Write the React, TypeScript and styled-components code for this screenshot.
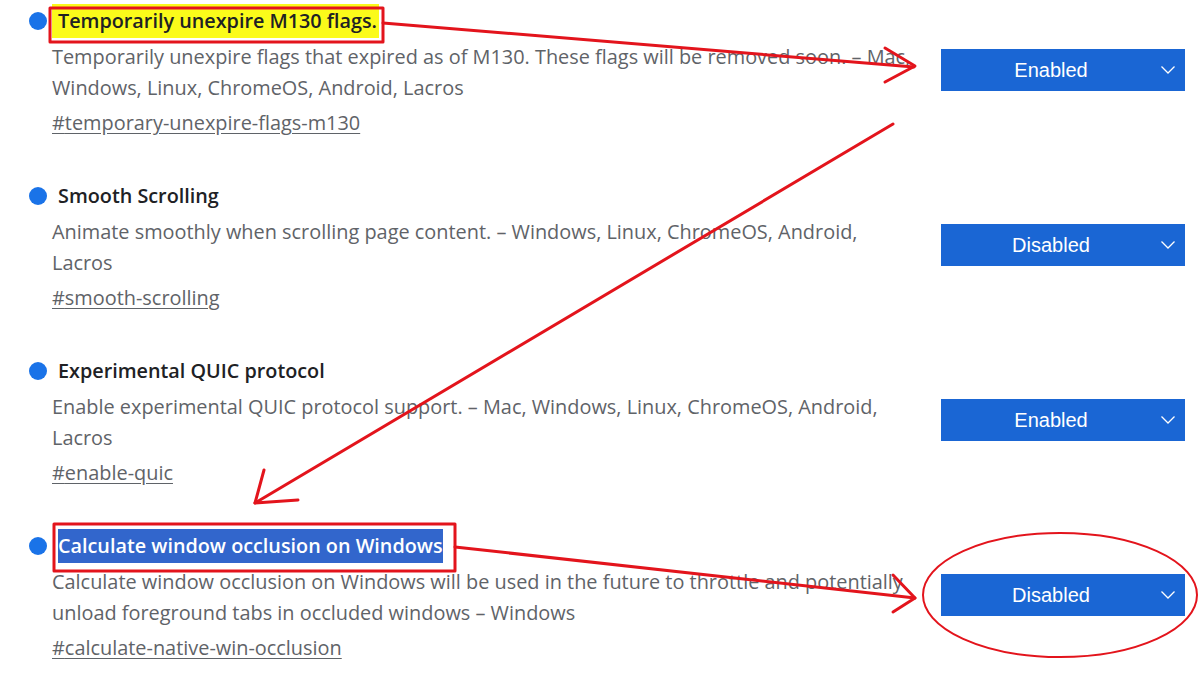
import React from "react";
import styled, { createGlobalStyle } from "styled-components";

const GlobalStyle = createGlobalStyle`
  html, body {
    margin: 0;
    padding: 0;
    background: #ffffff;
  }
  body {
    font-family: "Open Sans", "Noto Sans", sans-serif;
  }
`;

const Page = styled.div`
  position: relative;
  width: 1200px;
  height: 679px;
  overflow: hidden;
  background: #ffffff;
`;

const List = styled.div`
  display: flex;
  flex-direction: column;
`;

const Row = styled.div`
  display: flex;
  height: 175px;
`;

const Info = styled.div`
  flex: 0 0 870px;
  padding-left: 52px;
  display: flex;
  flex-direction: column;
`;

const TitleLine = styled.div`
  display: flex;
  align-items: center;
  height: 41px;
  margin-left: -23px;
  gap: 11px;
`;

const Bullet = styled.span`
  flex: 0 0 18px;
  width: 18px;
  height: 18px;
  border-radius: 50%;
  background: #1a73e8;
`;

type Mark = "none" | "yellow" | "selected";

const Title = styled.span<{ $mark: Mark }>`
  font-size: 19.8px;
  font-weight: 600;
  line-height: 34px;
  white-space: nowrap;
  color: ${(p) => (p.$mark === "selected" ? "#ffffff" : "#202124")};
  background: ${(p) =>
    p.$mark === "yellow" ? "#fbfb1a" : p.$mark === "selected" ? "#3266cc" : "transparent"};
  padding: ${(p) => (p.$mark === "yellow" ? "0 2px 0 6px" : "0")};
  margin-left: ${(p) => (p.$mark === "yellow" ? "-6px" : "0")};
`;

const Description = styled.p`
  margin: 0;
  font-size: 19.9px;
  line-height: 31px;
  color: #5f6368;
`;

const FlagLink = styled.a`
  margin-top: 4px;
  font-size: 19.9px;
  line-height: 31px;
  color: #5f6368;
  text-decoration: underline;
  text-underline-offset: 3px;
  align-self: flex-start;
`;

const Control = styled.div`
  margin-left: 19px;
  padding-top: 49px;
`;

const Select = styled.div`
  display: flex;
  align-items: center;
  width: 244px;
  height: 42px;
  background: #1a66d4;
  color: #ffffff;
  font-family: "Liberation Sans", Arial, sans-serif;
  font-size: 20px;
`;

const SelectLabel = styled.span`
  flex: 1;
  text-align: center;
`;

const Chevron = styled.svg`
  width: 14px;
  height: 8px;
  margin-right: 10px;
  flex: 0 0 14px;
`;

const Annotations = styled.svg`
  position: absolute;
  left: 0;
  top: 0;
  width: 1200px;
  height: 679px;
  pointer-events: none;
`;

type Flag = {
  title: string;
  mark: Mark;
  description: string;
  id: string;
  value: string;
};

const flags: Flag[] = [
  {
    title: "Temporarily unexpire M130 flags.",
    mark: "yellow",
    description:
      "Temporarily unexpire flags that expired as of M130. These flags will be removed soon. – Mac, Windows, Linux, ChromeOS, Android, Lacros",
    id: "temporary-unexpire-flags-m130",
    value: "Enabled",
  },
  {
    title: "Smooth Scrolling",
    mark: "none",
    description:
      "Animate smoothly when scrolling page content. – Windows, Linux, ChromeOS, Android, Lacros",
    id: "smooth-scrolling",
    value: "Disabled",
  },
  {
    title: "Experimental QUIC protocol",
    mark: "none",
    description:
      "Enable experimental QUIC protocol support. – Mac, Windows, Linux, ChromeOS, Android, Lacros",
    id: "enable-quic",
    value: "Enabled",
  },
  {
    title: "Calculate window occlusion on Windows",
    mark: "selected",
    description:
      "Calculate window occlusion on Windows will be used in the future to throttle and potentially unload foreground tabs in occluded windows – Windows",
    id: "calculate-native-win-occlusion",
    value: "Disabled",
  },
];

const red = "#e3141c";

export default function App() {
  return (
    <Page>
      <GlobalStyle />
      <List>
        {flags.map((f) => (
          <Row key={f.id}>
            <Info>
              <TitleLine>
                <Bullet />
                <Title $mark={f.mark}>{f.title}</Title>
              </TitleLine>
              <Description>{f.description}</Description>
              <FlagLink href={`#${f.id}`}>#{f.id}</FlagLink>
            </Info>
            <Control>
              <Select>
                <SelectLabel>{f.value}</SelectLabel>
                <Chevron viewBox="0 0 14 8">
                  <polyline points="0.5,0.5 7,7 13.5,0.5" fill="none" stroke="#ffffff" strokeWidth="1.3" />
                </Chevron>
              </Select>
            </Control>
          </Row>
        ))}
      </List>
      <Annotations viewBox="0 0 1200 679">
        <g fill="none" stroke={red} strokeWidth="3" strokeLinecap="round" strokeLinejoin="round">
          <rect x="50" y="8" width="333" height="34" />
          <polyline points="383,23 914,67" />
          <polyline points="885,48 915,66 885,82" />
          <polyline points="893,124 255,503" />
          <polyline points="264,470 255,503 298,500" />
          <rect x="54" y="524" width="401" height="47" />
          <polyline points="455,547 915,598" />
          <polyline points="893,575 915,598 893,612" />
          <ellipse cx="1060" cy="595" rx="137" ry="62" strokeWidth="2" />
        </g>
      </Annotations>
    </Page>
  );
}
